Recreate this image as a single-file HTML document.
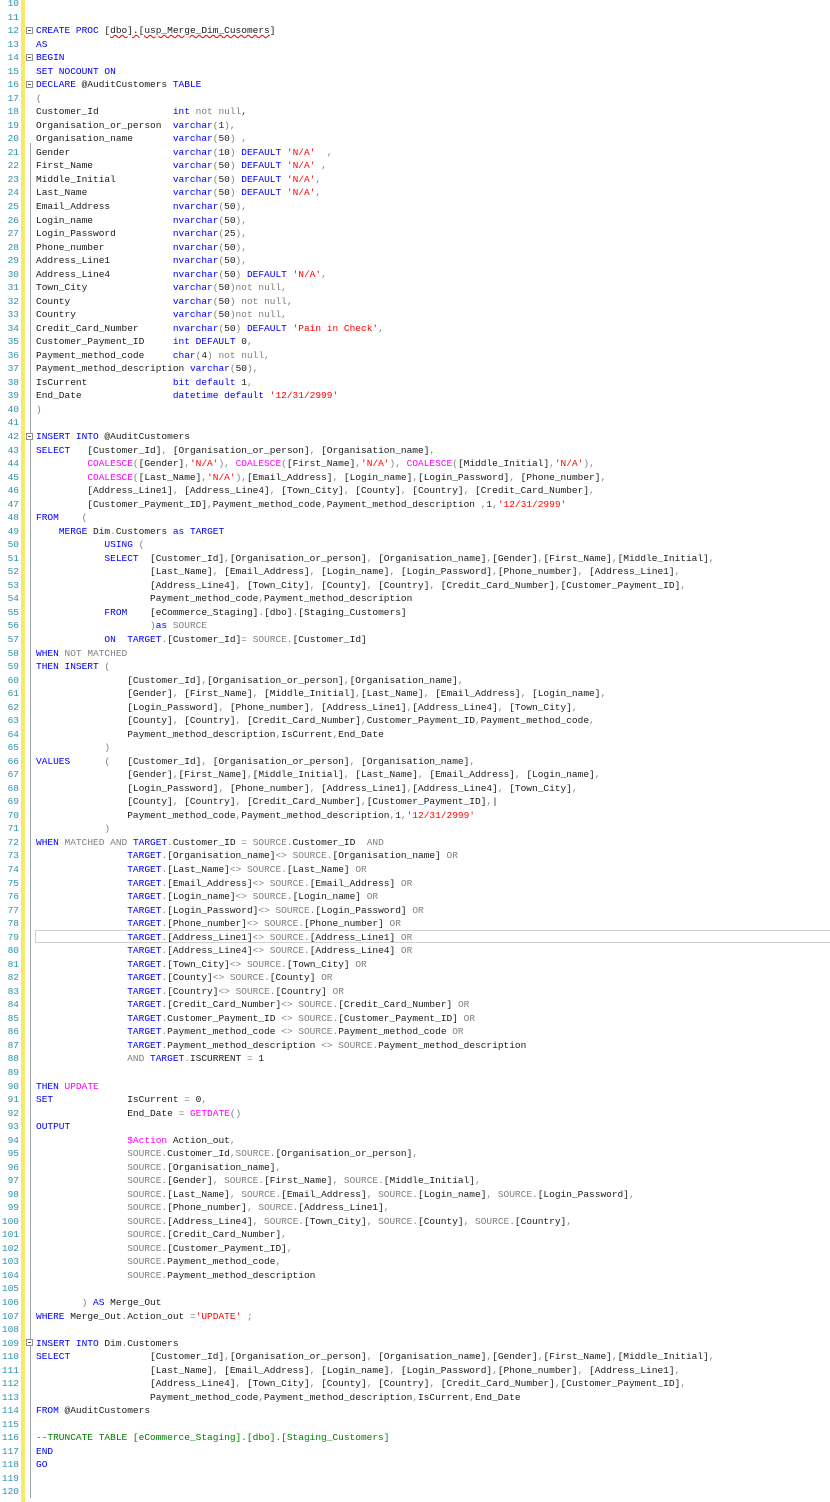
<!DOCTYPE html>
<html><head><meta charset="utf-8"><style>
html,body{margin:0;padding:0;background:#fff;}
body{width:830px;height:1502px;position:relative;overflow:hidden;}
#nums{position:absolute;left:0;top:-3px;width:19px;text-align:right;color:#2b91af;}
#code{position:absolute;left:36px;top:-3px;color:#1a1a1a;}
.l{height:13.536px;line-height:13.536px;white-space:pre;font-family:"Liberation Mono",monospace;font-size:9.5px;}
.k{color:#0000ff}.g{color:#808080}.s{color:#ff0000}.f{color:#ff00ff}.c{color:#008000}
.sq{text-decoration:underline wavy #e00;text-decoration-thickness:1px;}
#yb{position:absolute;left:21px;top:0;width:4px;height:1502px;background:#f7e96a;}
#fold{position:absolute;left:30px;top:143px;width:1px;height:1355px;background:#a0a0a0;}
.box{position:absolute;left:26px;width:7px;height:7px;border:1px solid #909090;background:#fff;box-sizing:border-box;}
.box:after{content:"";position:absolute;left:1px;top:2px;width:3px;height:1px;background:#555;}
#cur{position:absolute;left:35px;top:930px;width:800px;height:13px;border:1px solid #d0d0d0;box-sizing:border-box;}
</style></head><body>
<div id="yb"></div>
<div id="fold"></div>
<div id="cur"></div>
<div class="box" style="top:27px"></div>
<div class="box" style="top:54px"></div>
<div class="box" style="top:81px"></div>
<div class="box" style="top:433px"></div>
<div class="box" style="top:1339px"></div>
<div id="nums"><div class="l">10</div><div class="l">11</div><div class="l">12</div><div class="l">13</div><div class="l">14</div><div class="l">15</div><div class="l">16</div><div class="l">17</div><div class="l">18</div><div class="l">19</div><div class="l">20</div><div class="l">21</div><div class="l">22</div><div class="l">23</div><div class="l">24</div><div class="l">25</div><div class="l">26</div><div class="l">27</div><div class="l">28</div><div class="l">29</div><div class="l">30</div><div class="l">31</div><div class="l">32</div><div class="l">33</div><div class="l">34</div><div class="l">35</div><div class="l">36</div><div class="l">37</div><div class="l">38</div><div class="l">39</div><div class="l">40</div><div class="l">41</div><div class="l">42</div><div class="l">43</div><div class="l">44</div><div class="l">45</div><div class="l">46</div><div class="l">47</div><div class="l">48</div><div class="l">49</div><div class="l">50</div><div class="l">51</div><div class="l">52</div><div class="l">53</div><div class="l">54</div><div class="l">55</div><div class="l">56</div><div class="l">57</div><div class="l">58</div><div class="l">59</div><div class="l">60</div><div class="l">61</div><div class="l">62</div><div class="l">63</div><div class="l">64</div><div class="l">65</div><div class="l">66</div><div class="l">67</div><div class="l">68</div><div class="l">69</div><div class="l">70</div><div class="l">71</div><div class="l">72</div><div class="l">73</div><div class="l">74</div><div class="l">75</div><div class="l">76</div><div class="l">77</div><div class="l">78</div><div class="l">79</div><div class="l">80</div><div class="l">81</div><div class="l">82</div><div class="l">83</div><div class="l">84</div><div class="l">85</div><div class="l">86</div><div class="l">87</div><div class="l">88</div><div class="l">89</div><div class="l">90</div><div class="l">91</div><div class="l">92</div><div class="l">93</div><div class="l">94</div><div class="l">95</div><div class="l">96</div><div class="l">97</div><div class="l">98</div><div class="l">99</div><div class="l">100</div><div class="l">101</div><div class="l">102</div><div class="l">103</div><div class="l">104</div><div class="l">105</div><div class="l">106</div><div class="l">107</div><div class="l">108</div><div class="l">109</div><div class="l">110</div><div class="l">111</div><div class="l">112</div><div class="l">113</div><div class="l">114</div><div class="l">115</div><div class="l">116</div><div class="l">117</div><div class="l">118</div><div class="l">119</div><div class="l">120</div></div>
<div id="code">
<div class="l"> </div>
<div class="l"> </div>
<div class="l"><span class="k">CREATE PROC</span> [<span class="sq">dbo].[usp_Merge_Dim_Cusomers</span>]</div>
<div class="l"><span class="k">AS</span></div>
<div class="l"><span class="k">BEGIN</span></div>
<div class="l"><span class="k">SET NOCOUNT ON</span></div>
<div class="l"><span class="k">DECLARE</span> @AuditCustomers <span class="k">TABLE</span></div>
<div class="l"><span class="g">(</span></div>
<div class="l">Customer_Id             <span class="k">int</span> <span class="g">not null</span>,</div>
<div class="l">Organisation_or_person  <span class="k">varchar</span><span class="g">(</span>1<span class="g">),</span></div>
<div class="l">Organisation_name       <span class="k">varchar</span><span class="g">(</span>50<span class="g">) ,</span></div>
<div class="l">Gender                  <span class="k">varchar</span><span class="g">(</span>10<span class="g">)</span> <span class="k">DEFAULT</span> <span class="s">'N/A'</span>  <span class="g">,</span></div>
<div class="l">First_Name              <span class="k">varchar</span><span class="g">(</span>50<span class="g">)</span> <span class="k">DEFAULT</span> <span class="s">'N/A'</span> <span class="g">,</span></div>
<div class="l">Middle_Initial          <span class="k">varchar</span><span class="g">(</span>50<span class="g">)</span> <span class="k">DEFAULT</span> <span class="s">'N/A'</span><span class="g">,</span></div>
<div class="l">Last_Name               <span class="k">varchar</span><span class="g">(</span>50<span class="g">)</span> <span class="k">DEFAULT</span> <span class="s">'N/A'</span><span class="g">,</span></div>
<div class="l">Email_Address           <span class="k">nvarchar</span><span class="g">(</span>50<span class="g">),</span></div>
<div class="l">Login_name              <span class="k">nvarchar</span><span class="g">(</span>50<span class="g">),</span></div>
<div class="l">Login_Password          <span class="k">nvarchar</span><span class="g">(</span>25<span class="g">),</span></div>
<div class="l">Phone_number            <span class="k">nvarchar</span><span class="g">(</span>50<span class="g">),</span></div>
<div class="l">Address_Line1           <span class="k">nvarchar</span><span class="g">(</span>50<span class="g">),</span></div>
<div class="l">Address_Line4           <span class="k">nvarchar</span><span class="g">(</span>50<span class="g">)</span> <span class="k">DEFAULT</span> <span class="s">'N/A'</span><span class="g">,</span></div>
<div class="l">Town_City               <span class="k">varchar</span><span class="g">(</span>50<span class="g">)not null,</span></div>
<div class="l">County                  <span class="k">varchar</span><span class="g">(</span>50<span class="g">) not null,</span></div>
<div class="l">Country                 <span class="k">varchar</span><span class="g">(</span>50<span class="g">)not null,</span></div>
<div class="l">Credit_Card_Number      <span class="k">nvarchar</span><span class="g">(</span>50<span class="g">)</span> <span class="k">DEFAULT</span> <span class="s">'Pain in Check'</span><span class="g">,</span></div>
<div class="l">Customer_Payment_ID     <span class="k">int DEFAULT</span> 0<span class="g">,</span></div>
<div class="l">Payment_method_code     <span class="k">char</span><span class="g">(</span>4<span class="g">) not null,</span></div>
<div class="l">Payment_method_description <span class="k">varchar</span><span class="g">(</span>50<span class="g">),</span></div>
<div class="l">IsCurrent               <span class="k">bit default</span> 1<span class="g">,</span></div>
<div class="l">End_Date                <span class="k">datetime default</span> <span class="s">'12/31/2999'</span></div>
<div class="l"><span class="g">)</span></div>
<div class="l"> </div>
<div class="l"><span class="k">INSERT INTO</span> @AuditCustomers</div>
<div class="l"><span class="k">SELECT</span>   [Customer_Id]<span class="g">,</span> [Organisation_or_person]<span class="g">,</span> [Organisation_name]<span class="g">,</span></div>
<div class="l">         <span class="f">COALESCE</span><span class="g">(</span>[Gender]<span class="g">,</span><span class="s">'N/A'</span><span class="g">),</span> <span class="f">COALESCE</span><span class="g">(</span>[First_Name]<span class="g">,</span><span class="s">'N/A'</span><span class="g">),</span> <span class="f">COALESCE</span><span class="g">(</span>[Middle_Initial]<span class="g">,</span><span class="s">'N/A'</span><span class="g">),</span></div>
<div class="l">         <span class="f">COALESCE</span><span class="g">(</span>[Last_Name]<span class="g">,</span><span class="s">'N/A'</span><span class="g">),</span>[Email_Address]<span class="g">,</span> [Login_name]<span class="g">,</span>[Login_Password]<span class="g">,</span> [Phone_number]<span class="g">,</span></div>
<div class="l">         [Address_Line1]<span class="g">,</span> [Address_Line4]<span class="g">,</span> [Town_City]<span class="g">,</span> [County]<span class="g">,</span> [Country]<span class="g">,</span> [Credit_Card_Number]<span class="g">,</span></div>
<div class="l">         [Customer_Payment_ID]<span class="g">,</span>Payment_method_code<span class="g">,</span>Payment_method_description <span class="g">,</span>1<span class="g">,</span><span class="s">'12/31/2999'</span></div>
<div class="l"><span class="k">FROM</span>    <span class="g">(</span></div>
<div class="l">    <span class="k">MERGE</span> Dim<span class="g">.</span>Customers <span class="k">as</span> <span class="k">TARGET</span></div>
<div class="l">            <span class="k">USING</span> <span class="g">(</span></div>
<div class="l">            <span class="k">SELECT</span>  [Customer_Id]<span class="g">,</span>[Organisation_or_person]<span class="g">,</span> [Organisation_name]<span class="g">,</span>[Gender]<span class="g">,</span>[First_Name]<span class="g">,</span>[Middle_Initial]<span class="g">,</span></div>
<div class="l">                    [Last_Name]<span class="g">,</span> [Email_Address]<span class="g">,</span> [Login_name]<span class="g">,</span> [Login_Password]<span class="g">,</span>[Phone_number]<span class="g">,</span> [Address_Line1]<span class="g">,</span></div>
<div class="l">                    [Address_Line4]<span class="g">,</span> [Town_City]<span class="g">,</span> [County]<span class="g">,</span> [Country]<span class="g">,</span> [Credit_Card_Number]<span class="g">,</span>[Customer_Payment_ID]<span class="g">,</span></div>
<div class="l">                    Payment_method_code<span class="g">,</span>Payment_method_description</div>
<div class="l">            <span class="k">FROM</span>    [eCommerce_Staging]<span class="g">.</span>[dbo]<span class="g">.</span>[Staging_Customers]</div>
<div class="l">                    <span class="g">)</span><span class="k">as</span> <span class="g">SOURCE</span></div>
<div class="l">            <span class="k">ON</span>  <span class="k">TARGET</span><span class="g">.</span>[Customer_Id]<span class="g">=</span> <span class="g">SOURCE.</span>[Customer_Id]</div>
<div class="l"><span class="k">WHEN</span> <span class="g">NOT</span> <span class="g">MATCHED</span></div>
<div class="l"><span class="k">THEN INSERT</span> <span class="g">(</span></div>
<div class="l">                [Customer_Id]<span class="g">,</span>[Organisation_or_person]<span class="g">,</span>[Organisation_name]<span class="g">,</span></div>
<div class="l">                [Gender]<span class="g">,</span> [First_Name]<span class="g">,</span> [Middle_Initial]<span class="g">,</span>[Last_Name]<span class="g">,</span> [Email_Address]<span class="g">,</span> [Login_name]<span class="g">,</span></div>
<div class="l">                [Login_Password]<span class="g">,</span> [Phone_number]<span class="g">,</span> [Address_Line1]<span class="g">,</span>[Address_Line4]<span class="g">,</span> [Town_City]<span class="g">,</span></div>
<div class="l">                [County]<span class="g">,</span> [Country]<span class="g">,</span> [Credit_Card_Number]<span class="g">,</span>Customer_Payment_ID<span class="g">,</span>Payment_method_code<span class="g">,</span></div>
<div class="l">                Payment_method_description<span class="g">,</span>IsCurrent<span class="g">,</span>End_Date</div>
<div class="l">            <span class="g">)</span></div>
<div class="l"><span class="k">VALUES</span>      <span class="g">(</span>   [Customer_Id]<span class="g">,</span> [Organisation_or_person]<span class="g">,</span> [Organisation_name]<span class="g">,</span></div>
<div class="l">                [Gender]<span class="g">,</span>[First_Name]<span class="g">,</span>[Middle_Initial]<span class="g">,</span> [Last_Name]<span class="g">,</span> [Email_Address]<span class="g">,</span> [Login_name]<span class="g">,</span></div>
<div class="l">                [Login_Password]<span class="g">,</span> [Phone_number]<span class="g">,</span> [Address_Line1]<span class="g">,</span>[Address_Line4]<span class="g">,</span> [Town_City]<span class="g">,</span></div>
<div class="l">                [County]<span class="g">,</span> [Country]<span class="g">,</span> [Credit_Card_Number]<span class="g">,</span>[Customer_Payment_ID]<span class="g">,</span>|</div>
<div class="l">                Payment_method_code<span class="g">,</span>Payment_method_description<span class="g">,</span>1<span class="g">,</span><span class="s">'12/31/2999'</span></div>
<div class="l">            <span class="g">)</span></div>
<div class="l"><span class="k">WHEN</span> <span class="g">MATCHED AND</span> <span class="k">TARGET</span><span class="g">.</span>Customer_ID <span class="g">=</span> <span class="g">SOURCE.</span>Customer_ID  <span class="g">AND</span></div>
<div class="l">                <span class="k">TARGET</span><span class="g">.</span>[Organisation_name]<span class="g">&lt;&gt;</span> <span class="g">SOURCE.</span>[Organisation_name] <span class="g">OR</span></div>
<div class="l">                <span class="k">TARGET</span><span class="g">.</span>[Last_Name]<span class="g">&lt;&gt;</span> <span class="g">SOURCE.</span>[Last_Name] <span class="g">OR</span></div>
<div class="l">                <span class="k">TARGET</span><span class="g">.</span>[Email_Address]<span class="g">&lt;&gt;</span> <span class="g">SOURCE.</span>[Email_Address] <span class="g">OR</span></div>
<div class="l">                <span class="k">TARGET</span><span class="g">.</span>[Login_name]<span class="g">&lt;&gt;</span> <span class="g">SOURCE.</span>[Login_name] <span class="g">OR</span></div>
<div class="l">                <span class="k">TARGET</span><span class="g">.</span>[Login_Password]<span class="g">&lt;&gt;</span> <span class="g">SOURCE.</span>[Login_Password] <span class="g">OR</span></div>
<div class="l">                <span class="k">TARGET</span><span class="g">.</span>[Phone_number]<span class="g">&lt;&gt;</span> <span class="g">SOURCE.</span>[Phone_number] <span class="g">OR</span></div>
<div class="l">                <span class="k">TARGET</span><span class="g">.</span>[Address_Line1]<span class="g">&lt;&gt;</span> <span class="g">SOURCE.</span>[Address_Line1] <span class="g">OR</span></div>
<div class="l">                <span class="k">TARGET</span><span class="g">.</span>[Address_Line4]<span class="g">&lt;&gt;</span> <span class="g">SOURCE.</span>[Address_Line4] <span class="g">OR</span></div>
<div class="l">                <span class="k">TARGET</span><span class="g">.</span>[Town_City]<span class="g">&lt;&gt;</span> <span class="g">SOURCE.</span>[Town_City] <span class="g">OR</span></div>
<div class="l">                <span class="k">TARGET</span><span class="g">.</span>[County]<span class="g">&lt;&gt;</span> <span class="g">SOURCE.</span>[County] <span class="g">OR</span></div>
<div class="l">                <span class="k">TARGET</span><span class="g">.</span>[Country]<span class="g">&lt;&gt;</span> <span class="g">SOURCE.</span>[Country] <span class="g">OR</span></div>
<div class="l">                <span class="k">TARGET</span><span class="g">.</span>[Credit_Card_Number]<span class="g">&lt;&gt;</span> <span class="g">SOURCE.</span>[Credit_Card_Number] <span class="g">OR</span></div>
<div class="l">                <span class="k">TARGET</span><span class="g">.</span>Customer_Payment_ID <span class="g">&lt;&gt;</span> <span class="g">SOURCE.</span>[Customer_Payment_ID] <span class="g">OR</span></div>
<div class="l">                <span class="k">TARGET</span><span class="g">.</span>Payment_method_code <span class="g">&lt;&gt;</span> <span class="g">SOURCE.</span>Payment_method_code <span class="g">OR</span></div>
<div class="l">                <span class="k">TARGET</span><span class="g">.</span>Payment_method_description <span class="g">&lt;&gt;</span> <span class="g">SOURCE.</span>Payment_method_description</div>
<div class="l">                <span class="g">AND</span> <span class="k">TARGET</span><span class="g">.</span>ISCURRENT <span class="g">=</span> 1</div>
<div class="l"> </div>
<div class="l"><span class="k">THEN</span> <span class="f">UPDATE</span></div>
<div class="l"><span class="k">SET</span>             IsCurrent <span class="g">=</span> 0<span class="g">,</span></div>
<div class="l">                End_Date <span class="g">=</span> <span class="f">GETDATE</span><span class="g">()</span></div>
<div class="l"><span class="k">OUTPUT</span></div>
<div class="l">                <span class="f">$Action</span> Action_out<span class="g">,</span></div>
<div class="l">                <span class="g">SOURCE.</span>Customer_Id<span class="g">,SOURCE.</span>[Organisation_or_person]<span class="g">,</span></div>
<div class="l">                <span class="g">SOURCE.</span>[Organisation_name]<span class="g">,</span></div>
<div class="l">                <span class="g">SOURCE.</span>[Gender]<span class="g">, SOURCE.</span>[First_Name]<span class="g">, SOURCE.</span>[Middle_Initial]<span class="g">,</span></div>
<div class="l">                <span class="g">SOURCE.</span>[Last_Name]<span class="g">, SOURCE.</span>[Email_Address]<span class="g">, SOURCE.</span>[Login_name]<span class="g">, SOURCE.</span>[Login_Password]<span class="g">,</span></div>
<div class="l">                <span class="g">SOURCE.</span>[Phone_number]<span class="g">, SOURCE.</span>[Address_Line1]<span class="g">,</span></div>
<div class="l">                <span class="g">SOURCE.</span>[Address_Line4]<span class="g">, SOURCE.</span>[Town_City]<span class="g">, SOURCE.</span>[County]<span class="g">, SOURCE.</span>[Country]<span class="g">,</span></div>
<div class="l">                <span class="g">SOURCE.</span>[Credit_Card_Number]<span class="g">,</span></div>
<div class="l">                <span class="g">SOURCE.</span>[Customer_Payment_ID]<span class="g">,</span></div>
<div class="l">                <span class="g">SOURCE.</span>Payment_method_code<span class="g">,</span></div>
<div class="l">                <span class="g">SOURCE.</span>Payment_method_description</div>
<div class="l"> </div>
<div class="l">        <span class="g">)</span> <span class="k">AS</span> Merge_Out</div>
<div class="l"><span class="k">WHERE</span> Merge_Out<span class="g">.</span>Action_out <span class="g">=</span><span class="s">'UPDATE'</span> <span class="g">;</span></div>
<div class="l"> </div>
<div class="l"><span class="k">INSERT INTO</span> Dim<span class="g">.</span>Customers</div>
<div class="l"><span class="k">SELECT</span>              [Customer_Id]<span class="g">,</span>[Organisation_or_person]<span class="g">,</span> [Organisation_name]<span class="g">,</span>[Gender]<span class="g">,</span>[First_Name]<span class="g">,</span>[Middle_Initial]<span class="g">,</span></div>
<div class="l">                    [Last_Name]<span class="g">,</span> [Email_Address]<span class="g">,</span> [Login_name]<span class="g">,</span> [Login_Password]<span class="g">,</span>[Phone_number]<span class="g">,</span> [Address_Line1]<span class="g">,</span></div>
<div class="l">                    [Address_Line4]<span class="g">,</span> [Town_City]<span class="g">,</span> [County]<span class="g">,</span> [Country]<span class="g">,</span> [Credit_Card_Number]<span class="g">,</span>[Customer_Payment_ID]<span class="g">,</span></div>
<div class="l">                    Payment_method_code<span class="g">,</span>Payment_method_description<span class="g">,</span>IsCurrent<span class="g">,</span>End_Date</div>
<div class="l"><span class="k">FROM</span> @AuditCustomers</div>
<div class="l"> </div>
<div class="l"><span class="c">--TRUNCATE TABLE [eCommerce_Staging].[dbo].[Staging_Customers]</span></div>
<div class="l"><span class="k">END</span></div>
<div class="l"><span class="k">GO</span></div>
<div class="l"> </div>
<div class="l"> </div>
</div>
</body></html>
